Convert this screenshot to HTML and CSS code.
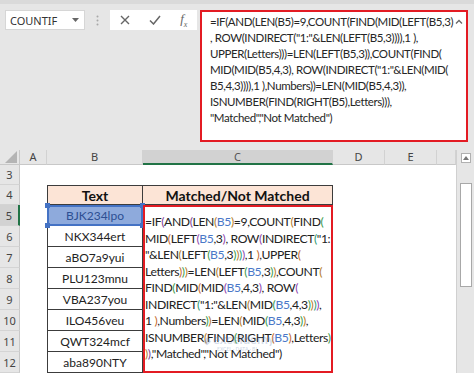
FILE: index.html
```html
<!DOCTYPE html>
<html>
<head>
    <meta charset="utf-8">
    <title>COUNTIF - Matched/Not Matched</title>
    <link rel="stylesheet" href="styles.css">
</head>
<body>
    <div class="ribbon">
        <div class="namebox">
            <span>COUNTIF</span>
            <svg class="caret" width="7" height="4" viewBox="0 0 7 4"><path d="M0 0h7L3.5 4z" fill="#666"/></svg>
        </div>
        <div class="grip">
            <svg width="3" height="11" viewBox="0 0 3 11"><circle cx="1.5" cy="1.5" r="1" fill="#a8a8a8"/><circle cx="1.5" cy="5.5" r="1" fill="#a8a8a8"/><circle cx="1.5" cy="9.5" r="1" fill="#a8a8a8"/></svg>
        </div>
        <div class="fx-buttons">
            <svg width="10" height="10" viewBox="0 0 10 10"><path d="M1 1l8 8M9 1l-8 8" stroke="#666" stroke-width="1.4"/></svg>
            <svg width="12" height="10" viewBox="0 0 12 10"><path d="M1 5.5l3.5 3.5L11 1" stroke="#666" stroke-width="1.5" fill="none"/></svg>
            <span class="fx">f<sub>x</sub></span>
        </div>
        <div class="formula-bar">
            <div class="formula-text">
                <div>=IF(AND(LEN(B5)=9,COUNT(FIND(MID(LEFT(B5,3)</div>
                <div>, ROW(INDIRECT("1:"&amp;LEN(LEFT(B5,3)))),1 ),</div>
                <div>UPPER(Letters)))=LEN(LEFT(B5,3)),COUNT(FIND(</div>
                <div>MID(MID(B5,4,3), ROW(INDIRECT("1:"&amp;LEN(MID(</div>
                <div>B5,4,3)))),1 ),Numbers))=LEN(MID(B5,4,3)),</div>
                <div>ISNUMBER(FIND(RIGHT(B5),Letters))),</div>
                <div>"Matched","Not Matched")</div>
            </div>
            <svg class="collapse" width="8" height="5" viewBox="0 0 8 5"><path d="M1 4.5L4 1.5l3 3" stroke="#666" stroke-width="1.3" fill="none"/></svg>
        </div>
    </div>

    <div class="sheet-wrap">
        <div class="sheet">
            <!-- column headers -->
            <div class="corner"><svg width="12" height="12" viewBox="0 0 12 12"><path d="M12 0v12H0z" fill="#b4b4b4"/></svg></div>
            <div class="col-head">A</div>
            <div class="col-head">B</div>
            <div class="col-head active">C</div>
            <div class="col-head">D</div>
            <div class="col-head">E</div>
            <div class="col-head"></div>

            <!-- cell editor over C5:C12 -->
            <div class="editor">
                <div>=IF<span class="d2">(</span>AND<span class="d2">(</span>LEN<span class="d3">(</span><span class="ref">B5</span><span class="d3">)</span>=9,COUNT<span class="d3">(</span>FIND<span class="d4">(</span></div>
                <div>MID<span class="d5">(</span>LEFT<span class="d6">(</span><span class="ref">B5</span>,3<span class="d6">)</span>, ROW<span class="d6">(</span>INDIRECT<span class="d7">(</span>"1:</div>
                <div>"&amp;LEN<span class="d8">(</span>LEFT<span class="d9">(</span><span class="ref">B5</span>,3<span class="d9">)</span><span class="d8">)</span><span class="d7">)</span><span class="d6">)</span>,1 <span class="d5">)</span>,UPPER<span class="d5">(</span></div>
                <div>Letters<span class="d5">)</span><span class="d4">)</span><span class="d3">)</span>=LEN<span class="d3">(</span>LEFT<span class="d4">(</span><span class="ref">B5</span>,3<span class="d4">)</span><span class="d3">)</span>,COUNT<span class="d3">(</span></div>
                <div>FIND<span class="d4">(</span>MID<span class="d5">(</span>MID<span class="d6">(</span><span class="ref">B5</span>,4,3<span class="d6">)</span>, ROW<span class="d6">(</span></div>
                <div>INDIRECT<span class="d7">(</span>"1:"&amp;LEN<span class="d8">(</span>MID<span class="d9">(</span><span class="ref">B5</span>,4,3<span class="d9">)</span><span class="d8">)</span><span class="d7">)</span><span class="d6">)</span>,</div>
                <div>1 <span class="d5">)</span>,Numbers<span class="d4">)</span><span class="d3">)</span>=LEN<span class="d3">(</span>MID<span class="d4">(</span><span class="ref">B5</span>,4,3<span class="d4">)</span><span class="d3">)</span>,</div>
                <div>ISNUMBER<span class="d3">(</span>FIND<span class="d4">(</span>RIGHT<span class="d5">(</span><span class="ref">B5</span><span class="d5">)</span>,Letters<span class="d4">)</span></div>
                <div><span class="d3">)</span><span class="d2">)</span>,"Matched","Not Matched")</div>
                <div class="watermark"><span class="wm-logo">◆</span>exceldemy<small>EXCEL · DATA · BI</small></div>
            </div>

            <!-- row 3 -->
            <div class="row-head">3</div>
            <div></div><div></div><div></div><div></div><div></div><div></div>
            <!-- row 4 -->
            <div class="row-head">4</div>
            <div></div>
            <div class="t-head first">Text</div>
            <div class="t-head">Matched/Not Matched</div>
            <div></div><div></div><div></div>
            <!-- rows 5-12 -->
            <div class="row-head active">5</div>
            <div></div>
            <div class="t-cell selected">BJK234lpo<i class="h tl"></i><i class="h bl"></i><i class="h tr"></i><i class="h br"></i></div>
            <div></div><div></div><div></div>
            <div class="row-head">6</div>
            <div></div><div class="t-cell">NKX344ert</div><div></div><div></div><div></div>
            <div class="row-head">7</div>
            <div></div><div class="t-cell">aBO7a9yui</div><div></div><div></div><div></div>
            <div class="row-head">8</div>
            <div></div><div class="t-cell">PLU123mnu</div><div></div><div></div><div></div>
            <div class="row-head">9</div>
            <div></div><div class="t-cell">VBA237you</div><div></div><div></div><div></div>
            <div class="row-head">10</div>
            <div></div><div class="t-cell">ILO456veu</div><div></div><div></div><div></div>
            <div class="row-head">11</div>
            <div></div><div class="t-cell">QWT324mcf</div><div></div><div></div><div></div>
            <div class="row-head">12</div>
            <div></div><div class="t-cell">aba890NTY</div><div></div><div></div><div></div>
        </div>
        <div class="vscroll">
            <div class="scroll-up"><svg width="6" height="4" viewBox="0 0 6 4"><path d="M0 4L3 0l3 4z" fill="#777"/></svg></div>
            <div class="scroll-thumb"></div>
        </div>
    </div>
</body>
</html>
```

FILE: styles.css
```css
body {
    margin: 0;
    width: 474px;
    height: 373px;
    overflow: hidden;
    background-color: #e6e6e6;
    font-family: "Lato", "Noto Sans", sans-serif;
}
.ribbon {
    height: 150px;
    box-sizing: border-box;
    border-top: 4px solid #dadada;
    padding-top: 6px;
    display: flex;
    align-items: flex-start;
}
.namebox {
    margin-left: 5px;
    width: 80px;
    height: 20px;
    box-sizing: border-box;
    background-color: #fff;
    border: 1px solid #d6d6d6;
    padding: 0 5px 0 4px;
    display: flex;
    align-items: center;
    justify-content: space-between;
    font-family: "Noto Sans", sans-serif;
    font-size: 11px;
    color: #333;
}
.grip {
    width: 25px;
    height: 20px;
    display: flex;
    align-items: center;
    justify-content: center;
}
.fx-buttons {
    width: 87px;
    height: 20px;
    background-color: #fff;
    display: flex;
    align-items: center;
    justify-content: space-around;
}
.fx {
    font-family: "Liberation Serif", serif;
    font-style: italic;
    font-size: 13px;
    color: #666;
    line-height: 1;
}
.fx sub {
    font-size: 8px;
}
.formula-bar {
    margin-left: 3px;
    width: 268px;
    height: 132px;
    box-sizing: border-box;
    background-color: #fff;
    border: 2px solid #e31b23;
    padding: 2px 3px 0 8px;
    display: flex;
    justify-content: space-between;
}
.formula-text {
    font-size: 11.5px;
    letter-spacing: -0.4px;
    line-height: 16px;
    color: #262626;
    white-space: nowrap;
}
.collapse {
    margin-top: 5px;
}

.sheet-wrap {
    display: flex;
    height: 223px;
}
.sheet {
    width: 456px;
    display: grid;
    grid-template-columns: 20px 27px 96px 190px 52px 52px 19px;
    grid-template-rows: 15px 20px 20px repeat(8, 21px);
    background-color: #fff;
}
.corner {
    background-color: #e6e6e6;
    border-bottom: 1px solid #c8c8c8;
    border-right: 1px solid #c8c8c8;
    box-sizing: border-box;
    display: flex;
    align-items: flex-end;
    justify-content: flex-end;
    padding: 0 2px 1px 0;
}
.col-head {
    background-color: #e6e6e6;
    border-bottom: 1px solid #c8c8c8;
    border-right: 1px solid #d2d2d2;
    box-sizing: border-box;
    font-family: "Noto Sans", sans-serif;
    font-size: 11px;
    line-height: 14px;
    color: #444;
    text-align: center;
}
.col-head.active {
    background-color: #d2d2d2;
    border-bottom: 2px solid #217346;
    color: #555;
}
.row-head {
    background-color: #e6e6e6;
    border-right: 1px solid #c8c8c8;
    border-bottom: 1px solid #d4d4d4;
    box-sizing: border-box;
    font-family: "Noto Sans", sans-serif;
    font-size: 11px;
    color: #444;
    display: flex;
    align-items: center;
    justify-content: center;
}
.row-head.active {
    background-color: #d2d2d2;
    border-right: 2px solid #217346;
}
.t-head {
    background-color: #fce4d6;
    border: 1px solid #3c3c3c;
    border-left: none;
    box-sizing: border-box;
    font-weight: bold;
    font-size: 14px;
    color: #111;
    display: flex;
    align-items: center;
    justify-content: center;
}
.t-head.first {
    border-left: 1px solid #3c3c3c;
}
.t-cell {
    border: 1px solid #3c3c3c;
    border-top: none;
    box-sizing: border-box;
    font-size: 12px;
    color: #222;
    display: flex;
    align-items: center;
    justify-content: center;
}
.t-cell.selected {
    position: relative;
    background-color: #8eaadc;
    border: 2px solid #4472c4;
    color: #2d4f93;
}
.h {
    position: absolute;
    width: 5px;
    height: 5px;
    background-color: #4472c4;
}
.h.tl { left: -4px; top: -4px; }
.h.bl { left: -4px; bottom: -4px; }
.h.tr { right: -4px; top: -4px; }
.h.br { right: -4px; bottom: -4px; }

.editor {
    grid-column: 4;
    grid-row: 4 / 12;
    position: relative;
    z-index: 2;
    background-color: #fff;
    border: 2px solid #e31b23;
    padding: 7px 0 0 0;
    font-size: 12.2px;
    letter-spacing: -0.4px;
    line-height: 16.5px;
    color: #222;
    white-space: nowrap;
    overflow: hidden;
}
.ref { color: #4a78c8; }
.d2 { color: #7d3c98; }
.d3 { color: #b47a1f; }
.d4 { color: #3a9a4a; }
.d5 { color: #c4692c; }
.d6 { color: #8e44ad; }
.d7 { color: #2e9a70; }
.d8 { color: #b47a1f; }
.d9 { color: #3a9a4a; }
.watermark {
    position: absolute;
    left: 58px;
    top: 126px;
    font-size: 13px;
    font-weight: bold;
    letter-spacing: 0;
    color: rgba(110, 140, 185, 0.3);
    line-height: 12px;
}
.watermark small {
    display: block;
    font-size: 5px;
    line-height: 6px;
    padding-left: 14px;
}
.wm-logo {
    font-size: 10px;
    margin-right: 2px;
}

.vscroll {
    width: 18px;
    box-sizing: border-box;
    border-left: 1px solid #d0d0d0;
    background-color: #e6e6e6;
    padding-top: 3px;
    display: flex;
    flex-direction: column;
    align-items: center;
}
.scroll-up {
    width: 10px;
    height: 10px;
    box-sizing: border-box;
    background-color: #fff;
    border: 1px solid #b0b0b0;
    display: flex;
    align-items: center;
    justify-content: center;
}
.scroll-thumb {
    margin-top: 20px;
    width: 12px;
    height: 104px;
    box-sizing: border-box;
    background-color: #fff;
    border: 1px solid #a8a8a8;
}
```
